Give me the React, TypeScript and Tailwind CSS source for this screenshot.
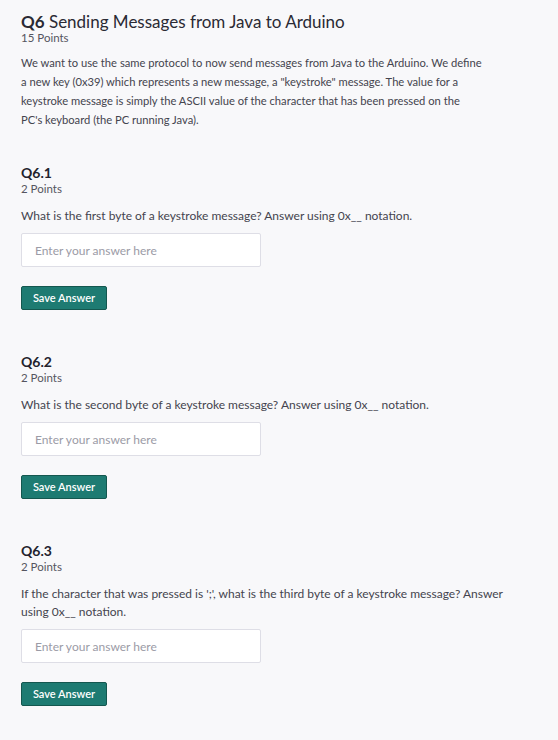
import { FC } from 'react'

type Part = {
  id: string
  points: string
  prompt: string
}

const parts: Part[] = [
  {
    id: 'Q6.1',
    points: '2 Points',
    prompt: 'What is the first byte of a keystroke message? Answer using 0x__ notation.',
  },
  {
    id: 'Q6.2',
    points: '2 Points',
    prompt: 'What is the second byte of a keystroke message? Answer using 0x__ notation.',
  },
  {
    id: 'Q6.3',
    points: '2 Points',
    prompt:
      "If the character that was pressed is ';', what is the third byte of a keystroke message? Answer using 0x__ notation.",
  },
]

const QuestionPart: FC<{ part: Part; first?: boolean }> = ({ part, first }) => {
  return (
    <div className={first ? 'mt-[35px]' : 'mt-[43px]'}>
      <h3 className="text-[14px] leading-[18px] font-bold text-[#23232d]">{part.id}</h3>
      <p className="text-[11.5px] leading-[14px] text-[#55555f]">{part.points}</p>
      <p className="mt-[11px] w-[490px] text-[12px] leading-[18px] text-[#44444e]">{part.prompt}</p>
      <input
        type="text"
        placeholder="Enter your answer here"
        className="mt-[8px] block h-[34px] w-[240px] rounded-[2px] border border-[#dedee6] bg-white px-[13px] text-[12px] text-[#44444e] outline-none placeholder:text-[#9b9ba6]"
      />
      <button className="mt-[19px] block h-[24px] w-[86px] rounded-[2px] border border-[#14574f] bg-[#1e7b72] text-[11px] font-semibold text-white">
        Save Answer
      </button>
    </div>
  )
}

export default function App() {
  return (
    <div
      className="min-h-[740px] bg-[#f8f8fa] px-[21px] pt-[12px] pb-[30px]"
      style={{ fontFamily: 'Lato, "Liberation Sans", sans-serif' }}
    >
      <h2 className="text-[17px] leading-[20px] text-[#2a2a34]">
        <span className="font-bold">Q6</span> Sending Messages from Java to Arduino
      </h2>
      <p className="text-[11.5px] leading-[12px] text-[#55555f]">15 Points</p>
      <p className="mt-[9px] w-[466px] text-[11.2px] leading-[19px] text-[#44444e]">
        We want to use the same protocol to now send messages from Java to the Arduino. We define a new
        key (0x39) which represents a new message, a "keystroke" message. The value for a keystroke message
        is simply the ASCII value of the character that has been pressed on the
        <br />
        PC's keyboard (the PC running Java).
      </p>
      {parts.map((p, i) => (
        <QuestionPart key={p.id} part={p} first={i === 0} />
      ))}
    </div>
  )
}
